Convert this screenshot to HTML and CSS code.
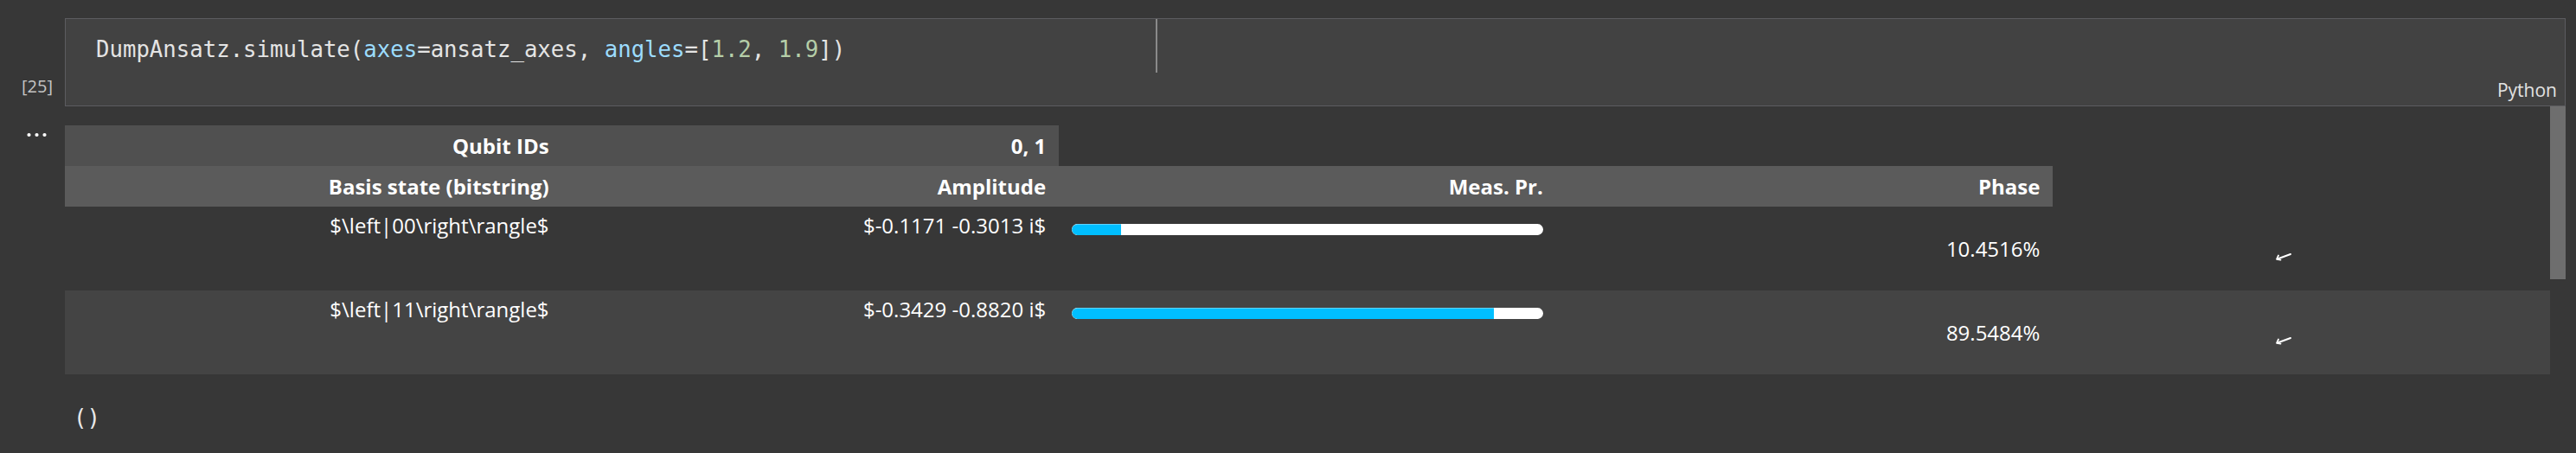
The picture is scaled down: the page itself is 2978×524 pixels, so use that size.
FILE: index.html
```html
<!DOCTYPE html>
<html lang="en">
<head>
<meta charset="utf-8">
<title>DumpAnsatz notebook cell</title>
<link rel="stylesheet" href="styles.css">
</head>
<body>
<div class="notebook">
  <div class="cell-input">
    <div class="exec-count">[25]</div>
    <div class="editor">
      <div class="code-line"><span class="tok-fn">DumpAnsatz.simulate(</span><span class="tok-param">axes</span><span class="tok-fn">=ansatz_axes, </span><span class="tok-param">angles</span><span class="tok-fn">=[</span><span class="tok-num">1.2</span><span class="tok-fn">, </span><span class="tok-num">1.9</span><span class="tok-fn">])</span></div>
      <div class="cursor"></div>
      <div class="lang-label">Python</div>
    </div>
  </div>

  <div class="cell-output">
    <div class="out-gutter">
      <svg class="dots" width="24" height="6" viewBox="0 0 24 6" aria-hidden="true">
        <circle cx="3.5" cy="3" r="2.1" fill="#ffffff"/>
        <circle cx="12.5" cy="3" r="2.1" fill="#ffffff"/>
        <circle cx="21.5" cy="3" r="2.1" fill="#ffffff"/>
      </svg>
    </div>
    <div class="out-body">
      <table class="state-table">
        <colgroup><col><col><col><col><col></colgroup>
        <thead>
          <tr class="qubit-row">
            <th class="qubit-cell">Qubit IDs</th>
            <th class="qubit-cell">0, 1</th>
            <th class="blank"></th>
            <th class="blank"></th>
            <th class="blank"></th>
          </tr>
          <tr class="head-row">
            <th class="head-cell">Basis state (bitstring)</th>
            <th class="head-cell">Amplitude</th>
            <th class="head-cell">Meas. Pr.</th>
            <th class="head-cell">Phase</th>
            <th class="blank"></th>
          </tr>
        </thead>
        <tbody>
          <tr class="state-row">
            <td class="c-top">$\left|00\right\rangle$</td>
            <td class="c-top">$-0.1171 -0.3013 i$</td>
            <td class="c-bar"><div class="bar"><div class="bar-fill" style="width:10.4516%"></div></div></td>
            <td class="c-mid">10.4516%</td>
            <td class="c-arrow">
              <svg class="phase-arrow" width="20" height="30" viewBox="0 0 20 30" aria-hidden="true">
                <path d="M19 21 L4 26.5" stroke="#ffffff" stroke-width="2" fill="none" stroke-linecap="round"/>
                <path d="M5 22.5 L3 26.8 L7.5 27.6" stroke="#ffffff" stroke-width="1.8" fill="none" stroke-linecap="round" stroke-linejoin="round"/>
              </svg>
            </td>
          </tr>
          <tr class="state-row alt">
            <td class="c-top">$\left|11\right\rangle$</td>
            <td class="c-top">$-0.3429 -0.8820 i$</td>
            <td class="c-bar"><div class="bar"><div class="bar-fill" style="width:89.5484%"></div></div></td>
            <td class="c-mid">89.5484%</td>
            <td class="c-arrow">
              <svg class="phase-arrow" width="20" height="30" viewBox="0 0 20 30" aria-hidden="true">
                <path d="M19 21 L4 26.5" stroke="#ffffff" stroke-width="2" fill="none" stroke-linecap="round"/>
                <path d="M5 22.5 L3 26.8 L7.5 27.6" stroke="#ffffff" stroke-width="1.8" fill="none" stroke-linecap="round" stroke-linejoin="round"/>
              </svg>
            </td>
          </tr>
        </tbody>
      </table>
      <pre class="plain-out">()</pre>
    </div>
    <div class="scroll-track"><div class="scroll-thumb"></div></div>
  </div>
</div>
</body>
</html>
```

FILE: styles.css
```css
html, body {
  margin: 0;
  padding: 0;
  background: #373737;
}

body {
  width: 2978px;
  height: 524px;
  overflow: hidden;
  font-family: "Open Sans", "Noto Sans", sans-serif;
  color: #ffffff;
}

.notebook {
  padding-top: 21px;
}

/* ---------- input cell ---------- */
.cell-input {
  display: flex;
  height: 102px;
}

.exec-count {
  width: 75px;
  box-sizing: border-box;
  padding: 0 14px 11px 0;
  display: flex;
  align-items: flex-end;
  justify-content: flex-end;
  font-size: 20px;
  line-height: 24px;
  color: #c4c4c4;
}

.editor {
  flex: 1;
  margin-right: 12px;
  box-sizing: border-box;
  border: 1px solid #5c5c60;
  background: #424242;
  position: relative;
  display: flex;
  flex-direction: column;
  justify-content: space-between;
  padding: 20px 9px 6px 35px;
}

.code-line {
  font-family: "DejaVu Sans Mono", "Liberation Mono", monospace;
  font-size: 25.7px;
  line-height: 30px;
  white-space: pre;
  color: #e4e4e4;
}

.tok-param { color: #9cdcfe; }
.tok-num { color: #b5cea8; }

.cursor {
  position: absolute;
  left: 1260px;
  top: 0;
  width: 2px;
  height: 62px;
  background: #8a8a8a;
}

.lang-label {
  align-self: flex-end;
  font-size: 21px;
  line-height: 24px;
  color: #e2e2e2;
}

/* ---------- output cell ---------- */
.cell-output {
  display: flex;
}

.out-gutter {
  width: 75px;
  flex: none;
  box-sizing: border-box;
  padding: 30px 0 0 30px;
}

.dots {
  display: block;
}

.out-body {
  flex: 1;
  min-width: 0;
  padding-top: 22px;
}

.scroll-track {
  width: 18px;
  flex: none;
  margin-right: 12px;
}

.scroll-thumb {
  height: 200px;
  background: #6e6e6e;
}

/* ---------- state table ---------- */
.state-table {
  width: 100%;
  table-layout: fixed;
  border-collapse: collapse;
  border-spacing: 0;
  font-size: 24px;
  line-height: 32px;
}

.state-table th,
.state-table td {
  padding: 0 15px;
  text-align: right;
  white-space: nowrap;
}

.state-table th {
  height: 47px;
  font-weight: 700;
  vertical-align: middle;
}

.qubit-cell {
  background: #505050;
}

.head-cell {
  background: #5b5b5b;
}

.state-row td {
  height: 97px;
  box-sizing: border-box;
}

.state-row.alt {
  background: #444444;
}

.c-top {
  vertical-align: top;
  padding-top: 6px !important;
}

.c-bar {
  vertical-align: top;
  padding-top: 20px !important;
}

.c-mid {
  vertical-align: middle;
}

.c-arrow {
  vertical-align: middle;
  text-align: left !important;
  padding-left: 256px !important;
}

.phase-arrow {
  display: block;
}

.bar {
  height: 13px;
  border-radius: 7px;
  background: #ffffff;
  overflow: hidden;
}

.bar-fill {
  height: 100%;
  background: #00bfff;
  box-sizing: border-box;
  border-top: 1px solid #5fd3ff;
  border-radius: 7px 0 0 7px;
}

.plain-out {
  margin: 35px 0 0 10px;
  font-family: "DejaVu Sans Mono", "Liberation Mono", monospace;
  font-size: 25.7px;
  line-height: 30px;
  color: #e8e8e8;
}
```
